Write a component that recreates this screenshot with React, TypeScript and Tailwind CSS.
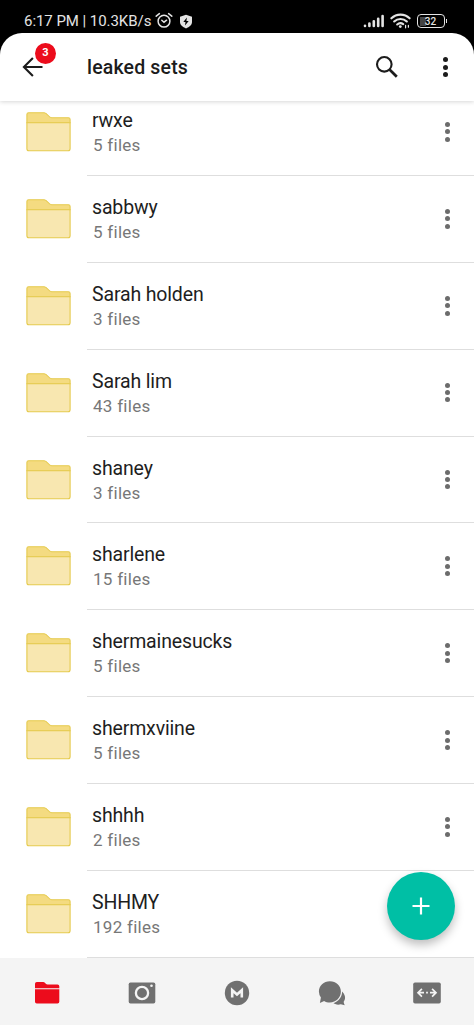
const folders = [
    { name: "rwxe", count: 5 },
    { name: "sabbwy", count: 5 },
    { name: "Sarah holden", count: 3 },
    { name: "Sarah lim", count: 43 },
    { name: "shaney", count: 3 },
    { name: "sharlene", count: 15 },
    { name: "shermainesucks", count: 5 },
    { name: "shermxviine", count: 5 },
    { name: "shhhh", count: 2 },
    { name: "SHHMY", count: 192 },
];

const StatusBar = () => (
    <div className="flex h-[33px] shrink-0 items-center justify-between pt-[9px] pr-[27px] pl-6 text-[#e4e4e4]">
        <div className="flex items-center">
            <span className="w-[129px] text-[15px] leading-4 tracking-[-0.05px] whitespace-nowrap">6:17 PM | 10.3KB/s</span>
            <svg className="ml-[2px]" width="18" height="18" viewBox="0 0 18 18" fill="none" stroke="currentColor" strokeWidth="1.5" strokeLinecap="round">
                <circle cx="9" cy="9.2" r="5.9" />
                <path d="M1.2 4.2 4.4 1.6M16.8 4.2 13.600 1.600M6.800 8.200 9 10.200l2.600-2" />
            </svg>
            <svg className="ml-[6px]" width="14" height="15" viewBox="0 0 14 15">
                <path d="M7 .8 13 2.7v5c0 3.200-2.600 5.200-6 6.700-3.400-1.500-6-3.500-6-6.700v-5Z" fill="currentColor" />
                <path d="M7.9 3.4 4.3 8.1h2.2l-.5 3.5L9.7 7H7.4Z" fill="#000" />
            </svg>
        </div>
        <div className="flex items-center">
            <svg width="22" height="14" viewBox="0 0 22 14" fill="none" stroke="currentColor" strokeWidth="2.6" strokeLinecap="round">
                <path d="M2 12v-.3M6.4 12V9.6M10.8 12V7.3M15.2 12V4.7M19.6 12V2" />
            </svg>
            <svg className="ml-[5px]" width="21" height="16" viewBox="0 0 21 16" fill="none" stroke="currentColor" strokeWidth="2.1" strokeLinecap="round">
                <path d="M1.4 5.3a13 13 0 0 1 18.2 0M4.2 8.5a9 9 0 0 1 12.6 0M7.2 11.5a4.8 4.8 0 0 1 6-.3" />
                <circle cx="10.3" cy="13.6" r="1.4" fill="currentColor" stroke="none" />
                <path d="M15.6 12.4v2.4M18.4 12.4v1.8" strokeWidth="1.2" />
            </svg>
            <div className="ml-[6px] flex h-[14px] w-[28px] items-center justify-center rounded-[4px] border-[1.5px] border-[#e4e4e4]">
                <span className="flex h-[9px] w-[21px] items-center justify-center bg-linear-to-r from-[#444] from-30% to-black to-30% pt-px text-[10px] leading-none font-medium">32</span>
            </div>
            <div className="ml-px h-1 w-[1.5px] bg-[#e4e4e4]"></div>
        </div>
    </div>
);

const Header = () => (
    <header className="relative z-10 flex h-[68px] shrink-0 items-center rounded-t-[22px] bg-white text-[#1c1c1c] shadow-[0_1px_4px_rgba(0,0,0,0.16)]">
        <button aria-label="Back" className="relative ml-[21px] h-6 w-[34px]">
            <svg width="22" height="22" viewBox="0 0 22 22" fill="none" stroke="currentColor" strokeWidth="2.1">
                <path d="M21.500 11H3M11.900 2 2.900 11l9 9" />
            </svg>
            <span className="absolute top-[-12px] left-[14px] flex size-[21px] items-center justify-center rounded-full bg-[#ec0c1c] text-[11px] font-bold text-white">3</span>
        </button>
        <h1 className="ml-8 pt-px text-[19.5px] leading-6 font-medium tracking-[0.17px]">leaked sets</h1>
        <button aria-label="Search" className="mr-[44px] ml-auto">
            <svg width="24" height="24" viewBox="0 0 24 24" fill="none" stroke="currentColor">
                <circle cx="9.3" cy="9.3" r="7.3" strokeWidth="2.1" />
                <path d="m14.5 14.5 7.3 7.3" strokeWidth="2.7" />
            </svg>
        </button>
        <button aria-label="More" className="mr-[26px] flex flex-col gap-[2.4px]">
            <i className="size-[5px] rounded-full bg-[#1c1c1c]"></i>
            <i className="size-[5px] rounded-full bg-[#1c1c1c]"></i>
            <i className="size-[5px] rounded-full bg-[#1c1c1c]"></i>
        </button>
    </header>
);

const FolderIcon = () => (
    <svg className="mt-[23px] ml-[26px] shrink-0" width="45" height="40" viewBox="0 0 45 40" stroke="#e5ca4d" strokeWidth="1.1">
        <path d="M.9 10.8V2.500Q.9.8 2.600.8h15.600c3.300 0 4.200 4.900 7.500 4.900h16.700q1.700 0 1.700 1.700v3.400Z" fill="#f4db81" />
        <path d="M.9 10.800h43.200v26q0 2-2 2H2.900q-2 0-2-2Z" fill="#f8e7b0" />
    </svg>
);

type FolderRowProps = {
    name: string;
    count: number;
};

const FolderRow = ({ name, count }: FolderRowProps) => (
    <li className="flex h-[86.88px] shrink-0">
        <FolderIcon />
        <div className="ml-4 flex flex-1 border-b-[1.5px] border-[#dedede] pl-[5px]">
            <div className="pt-5">
                <p className="text-[19.5px] leading-6 tracking-[-0.15px] text-[#1e1e1e]">{name}</p>
                <p className="pl-px text-[17px] leading-6 tracking-[0.27px] text-[#777]">{count} files</p>
            </div>
            <button aria-label="Options" className="mt-[33px] mr-[24px] ml-auto flex flex-col gap-[2.4px] self-start">
                <i className="size-[5px] rounded-full bg-[#6c6c6c]"></i>
                <i className="size-[5px] rounded-full bg-[#6c6c6c]"></i>
                <i className="size-[5px] rounded-full bg-[#6c6c6c]"></i>
            </button>
        </div>
    </li>
);

const BottomNav = () => (
    <nav className="flex h-[67px] shrink-0 items-center justify-around bg-[#f4f4f4] pt-0.5 text-[#707070]">
        <svg width="28" height="28" viewBox="0 0 28 28" fill="#ec0c1c">
            <path d="M2 9.300V4.800Q2 3 3.800 3h6.400q1 0 1.700.8l.9 1q.7.7 1.700.7h10q1.800 0 1.800 1.800v2ZM2 10.300h24.300v12.400q0 1.800-1.800 1.800H3.800Q2 24.500 2 22.700Z" />
        </svg>
        <svg width="28" height="28" viewBox="0 0 28 28">
            <rect x=".7" y="3.5" width="26.6" height="21" rx="1.8" fill="currentColor" />
            <circle cx="14" cy="14" r="6.1" fill="none" stroke="#f4f4f4" strokeWidth="2.3" />
            <circle cx="23.5" cy="6.7" r="1.3" fill="#f4f4f4" />
        </svg>
        <svg width="28" height="28" viewBox="0 0 28 28">
            <circle cx="14" cy="14" r="12.2" fill="currentColor" />
            <path d="M9.200 18.500V11.200l4.800 4.300 4.800-4.300v7.300" fill="none" stroke="#f4f4f4" strokeWidth="2.6" />
        </svg>
        <svg width="28" height="28" viewBox="0 0 28 28" fill="currentColor">
            <path d="M17 12.500c3-2.500 6-1.500 7.700.7 3.300 3.600 2.700 7.300 1 9.500 0 1.500.7 2.300 1.100 3.600l-4-1c-3 .9-6.200.1-7.800-1.800Z" />
            <path
                d="M11.900 2.200c6.200 0 11 4.500 11 10.400S18.100 23.500 11.900 23.500c-2.300 0-4.200-.5-5.800-1.600L1.900 24l1-5.500A10.200 10.200 0 0 1 .9 12.600C.9 6.700 5.700 2.200 11.900 2.200Z"
                stroke="#f4f4f4"
                strokeWidth="2.4"
                paintOrder="stroke"
            />
        </svg>
        <svg width="28" height="28" viewBox="0 0 28 28">
            <rect x=".2" y="3.5" width="27.6" height="21" rx="1.8" fill="currentColor" />
            <path
                d="M8.900 9.800 5 13.700l3.900 3.900M19.100 9.800l3.900 3.900-3.900 3.900M5 13.700h6M17 13.700h6M13.100 13.700h1.800"
                fill="none"
                stroke="#f4f4f4"
                strokeWidth="1.7"
            />
        </svg>
    </nav>
);

const App = () => {
    return (
        <div className="relative flex h-[1027px] w-[474px] flex-col overflow-hidden bg-black font-['Roboto',sans-serif]">
            <StatusBar />
            <Header />
            <ul className="-mt-[12px] flex h-[869px] shrink-0 flex-col overflow-hidden bg-white">
                {folders.map((folder) => (
                    <FolderRow key={folder.name} name={folder.name} count={folder.count} />
                ))}
            </ul>
            <BottomNav />
            <div className="h-[2px] shrink-0 bg-white"></div>
            <button
                aria-label="Add"
                className="absolute right-[19px] bottom-[87px] flex size-[68px] items-center justify-center rounded-full bg-[#00bfa5] shadow-[0_5px_10px_rgba(0,0,0,0.25)]"
            >
                <svg width="18" height="18" viewBox="0 0 18 18" stroke="#fff" strokeWidth="2.2">
                    <path d="M9 .5v17M.5 9h17" />
                </svg>
            </button>
        </div>
    )
}
export default App
